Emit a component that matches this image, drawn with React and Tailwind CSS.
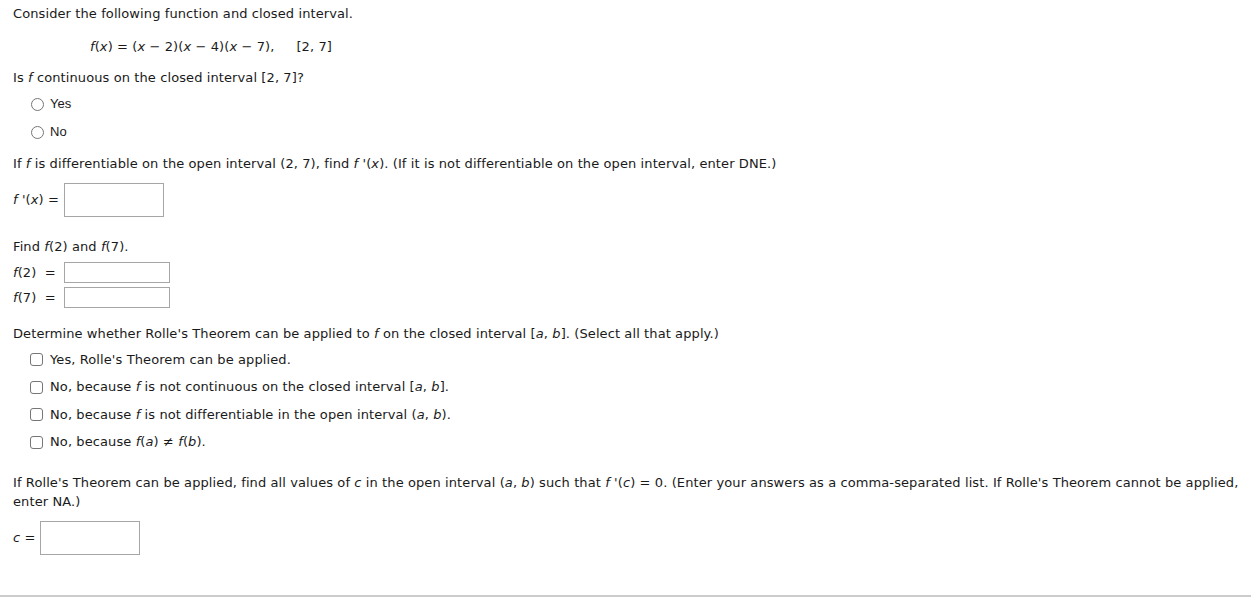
import React from "react";

const I = ({ children }) => <i className="italic">{children}</i>;

const Radio = ({ label }) => (
  <div className="flex items-center h-[28px] pl-[18px]">
    <span className="w-[13px] h-[13px] rounded-full border border-[#767676] bg-white"></span>
    <span className="ml-[6px] font-['Liberation_Sans',Arial,sans-serif] text-[13px] tracking-normal">{label}</span>
  </div>
);

const Check = ({ children }) => (
  <div className="flex items-center h-[27.5px] pl-[17px]">
    <span className="w-[13px] h-[13px] rounded-[3px] border border-[#767676] bg-white"></span>
    <span className="ml-[7px]">{children}</span>
  </div>
);

const Box = ({ className }) => (
  <div className={`border border-[#a6a6a6] bg-white ${className}`}></div>
);

export default function App() {
  return (
    <div className="bg-white text-[#1a1a1a] font-['DejaVu_Sans',Verdana,sans-serif] text-[13px] leading-4 tracking-[0.1px] min-h-[598px]">
      <div className="pl-[13px] pr-[4px] pt-[6px] pb-[40px] border-b-2 border-[#cccccc]">
        <p>Consider the following function and closed interval.</p>

        <p className="mt-[17px] pl-[77px]">
          <I>f</I>(<I>x</I>) = (<I>x</I> − 2)(<I>x</I> − 4)(<I>x</I> − 7),
          <span className="ml-[22px]">[2, 7]</span>
        </p>

        <p className="mt-[15px]">
          Is <I>f</I> continuous on the closed interval [2, 7]?
        </p>

        <div className="mt-[4px]">
          <Radio label="Yes" />
          <Radio label="No" />
        </div>

        <p className="mt-[10px]">
          If <I>f</I> is differentiable on the open interval (2, 7), find <I>f</I> '(<I>x</I>). (If it is not differentiable on the open interval, enter DNE.)
        </p>

        <div className="mt-[11px] flex items-center">
          <span>
            <I>f</I> '(<I>x</I>) =
          </span>
          <Box className="ml-[5px] w-[100px] h-[34px]" />
        </div>

        <p className="mt-[22px]">
          Find <I>f</I>(2) and <I>f</I>(7).
        </p>

        <div className="mt-[7px] flex items-center">
          <span className="w-[51px]">
            <I>f</I>(2)&nbsp;&nbsp;=
          </span>
          <Box className="w-[106px] h-[21px]" />
        </div>
        <div className="mt-[4px] flex items-center">
          <span className="w-[51px]">
            <I>f</I>(7)&nbsp;&nbsp;=
          </span>
          <Box className="w-[106px] h-[21px]" />
        </div>

        <p className="mt-[18px]">
          Determine whether Rolle's Theorem can be applied to <I>f</I> on the closed interval [<I>a</I>, <I>b</I>]. (Select all that apply.)
        </p>

        <div className="mt-[4px]">
          <Check>Yes, Rolle's Theorem can be applied.</Check>
          <Check>
            No, because <I>f</I> is not continuous on the closed interval [<I>a</I>, <I>b</I>].
          </Check>
          <Check>
            No, because <I>f</I> is not differentiable in the open interval (<I>a</I>, <I>b</I>).
          </Check>
          <Check>
            No, because <I>f</I>(<I>a</I>) ≠ <I>f</I>(<I>b</I>).
          </Check>
        </div>

        <p className="mt-[17px] leading-[19px]">
          If Rolle's Theorem can be applied, find all values of <I>c</I> in the open interval (<I>a</I>, <I>b</I>) such that <I>f</I> '(<I>c</I>) = 0. (Enter your answers as a comma-separated list. If Rolle's Theorem cannot be applied, enter NA.)
        </p>

        <div className="mt-[10px] flex items-center">
          <span>
            <I>c</I> =
          </span>
          <Box className="ml-[5px] w-[100px] h-[34px]" />
        </div>
      </div>
    </div>
  );
}
